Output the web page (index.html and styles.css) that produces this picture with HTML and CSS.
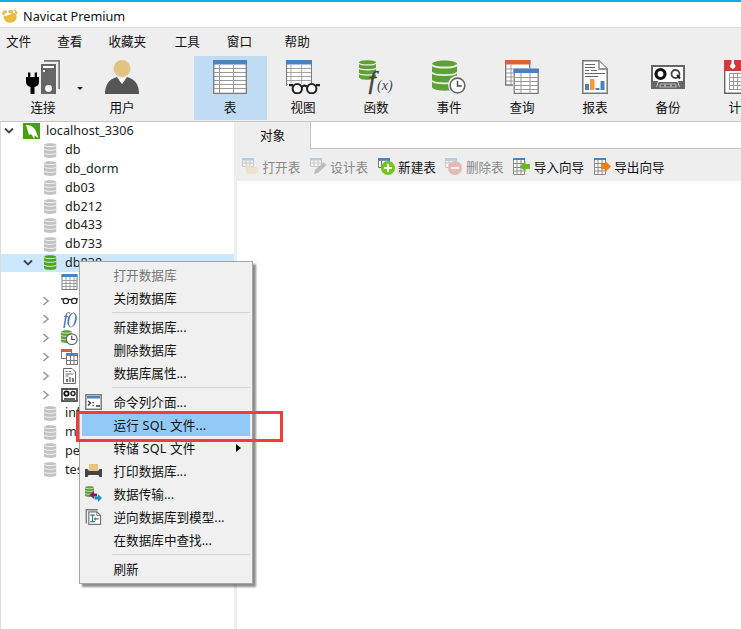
FILE: index.html
```html
<!DOCTYPE html>
<html lang="zh-CN">
<head>
<meta charset="utf-8">
<title>Navicat Premium</title>
<link rel="stylesheet" href="styles.css">
</head>
<body>
<svg class="defs" aria-hidden="true">
  <symbol id="cylinder" viewBox="0 0 24 30" preserveAspectRatio="none">
    <path d="M0 4C0 -.8 24 -.8 24 4V26C24 31 0 31 0 26Z" fill="currentColor"/>
    <path d="M0 4.500C2 8.200 22 8.200 24 4.500M0 12C2 15.500 22 15.500 24 12M0 20C2 23.500 22 23.500 24 20" fill="none" stroke="#fff" stroke-opacity=".85" stroke-width="1.900"/>
  </symbol>
  <symbol id="grid-blue" viewBox="0 0 34 34" preserveAspectRatio="none">
    <path d="M.7 2h32.6v31.3H.7z" fill="#fff" stroke="#777" stroke-width="1.3"/>
    <path d="M0 0h34v4.5H0z" fill="#4a82bd"/>
    <path d="M1 8.500h32M1 12.500h32M1 16.500h32M1 20.500h32M1 24.500h32M1 28.500h32M6.500 5v28M20.500 5v28" stroke="#999" fill="none"/>
  </symbol>
  <symbol id="small-grid" viewBox="0 0 16 16">
    <path d="M.5 1h15v14.5H.5z" fill="#fff" stroke="#777"/>
    <path d="M0 0h16v3H0z" fill="#4a82bd"/>
    <path d="M1 6.5h14M1 9.5h14M1 12.5h14M4.500 3v12M8.500 3v12M12.500 3v12" stroke="#888" fill="none" stroke-width=".8"/>
  </symbol>
  <symbol id="glasses" viewBox="0 0 30 12">
    <path d="M0 3h4M26 3h4" stroke="#222" stroke-width="2.200"/>
    <circle cx="8" cy="6.500" r="4.500" fill="#fff" stroke="#222" stroke-width="2"/>
    <circle cx="22" cy="6.500" r="4.500" fill="#fff" stroke="#222" stroke-width="2"/>
    <path d="M12 5q3-3 6 0" fill="none" stroke="#222" stroke-width="2"/>
  </symbol>
  <symbol id="clock" viewBox="0 0 18 18">
    <circle cx="9" cy="9" r="7.800" fill="#fff" stroke="#666" stroke-width="1.700"/>
    <path d="M9 4v5.500h4.500" fill="none" stroke="#444" stroke-width="1.500"/>
  </symbol>
  <symbol id="queries" viewBox="0 0 34 34">
    <path d="M.7 1h24v24H.7z" fill="#fff" stroke="#777" stroke-width="1.300"/>
    <path d="M0 0h25.500v4.500H0z" fill="#d9603f"/>
    <path d="M1 9h24M1 13h24M1 17h24M1 21h24M6 5v20" stroke="#999"/>
    <path d="M8 8h26v26H8z" fill="#fff"/>
    <path d="M9.200 9.500h24v23.800h-24z" fill="#fff" stroke="#777" stroke-width="1.300"/>
    <path d="M8.500 8.500H34V13H8.500z" fill="#4a82bd"/>
    <path d="M9 17.500h24M9 21.500h24M9 25.500h24M9 29.500h24M16 13v20M25 13v20" stroke="#999"/>
  </symbol>
  <symbol id="report" viewBox="0 0 26 34">
    <path d="M.8.8H17l8.200 8.200v24.200H.8z" fill="#fff" stroke="#777" stroke-width="1.500"/>
    <path d="M17 1v8h8" fill="#fff" stroke="#777" stroke-width="1.300"/>
    <path d="M3 4.500h10M3 7.500h10M3 10.500h4M9 10.500h6M3 13.500h20M3 16.500h13" stroke="#666" stroke-width="1.200"/>
    <path d="M3 24h4v6H3zM13.500 28h4v2h-4zM18.500 21h4v9h-4z" fill="#4a82bd"/>
    <path d="M8 19h4.500v11H8z" fill="#f79a38"/>
  </symbol>
  <symbol id="tape" viewBox="0 0 34 24">
    <path d="M1 1h32v22H1z" fill="#fff" stroke="#666" stroke-width="2"/>
    <circle cx="9.500" cy="9" r="4.500" fill="#fff" stroke="#111" stroke-width="3.200"/>
    <circle cx="24.500" cy="9" r="4" fill="#fff" stroke="#444" stroke-width="1.800"/>
    <path d="M26 10l3 3.500" stroke="#222" stroke-width="2"/>
    <path d="M1 16h6l-2 7H1zM27 16h6v7h-4z" fill="#666"/>
    <path d="M7.500 17h19l2 6h-23z" fill="#666"/>
    <path d="M9 18.500h16l1 4H8z" fill="#aaa"/>
    <path d="M10 20.500h3M15 20.500h4M21 20.500h3" stroke="#555" stroke-width="1.500"/>
  </symbol>
  <symbol id="chevron-right" viewBox="0 0 8 10"><path d="M1.500 1l4.500 4-4.500 4" fill="none" stroke="#999" stroke-width="1.600"/></symbol>
  <symbol id="chevron-down" viewBox="0 0 10 8"><path d="M1 1.500l4 4 4-4" fill="none" stroke="#444" stroke-width="1.900"/></symbol>
</svg>

<div class="window">
  <header class="titlebar">
    <svg class="app-icon" viewBox="0 0 16 14"><path d="M0 5.500Q0 3 1.500 1.800L4 1.200Q5.500 1.500 5 3L3 5q-1.500 1.500-3 .5z" fill="#e8bd3e"/><path d="M6 2q2-2 4-1l1.500 2L10 4.500 7 4zM11.500.2q4 1 4 5.300l-2-1z" fill="#e8bd3e"/><path d="M1.500 6.500Q6 7.500 10.500 4l3.200.5q2.300 4-.7 7.500-3 2.500-7 1.500-4.500-1-4.500-7z" fill="#e8bd3e"/></svg>
    <span class="app-title">Navicat Premium</span>
  </header>

  <nav class="menubar">
    <span>文件</span><span>查看</span><span>收藏夹</span><span>工具</span><span>窗口</span><span>帮助</span>
  </nav>

  <div class="ribbon">
    <div class="tool connect">
      <svg width="34" height="34" viewBox="0 0 34 34"><path d="M18 .8h15.200V29" fill="none" stroke="#777" stroke-width="1.800"/><path d="M15 4h15v30H15z" fill="#666"/><path d="M17 6h11v2H17zM17 10h2v2h-2z" fill="#fff"/><circle cx="22.500" cy="28.500" r="3.400" fill="#fff"/><path d="M2 12.500h2.300V17h4.400v-4.500H11V17h2v5q0 4-4.500 5v7h-4v-7Q0 26 0 22v-5h2z" fill="#000"/></svg>
      <span>连接</span>
    </div>
    <i class="drop"></i>
    <div class="tool user">
      <svg width="34" height="34" viewBox="0 0 34 34"><circle cx="17" cy="8.500" r="8.500" fill="#e4c380"/><path d="M0 34q0-14 12-17l5 7 5-7q12 3 12 17z" fill="#555"/><path d="M12.500 17q4.500 2 9 0L17 24z" fill="#fff"/></svg>
      <span>用户</span>
    </div>
    <i class="divider"></i>
    <div class="tool selected"><svg width="34" height="34"><use href="#grid-blue"/></svg><span>表</span></div>
    <div class="tool"><svg width="34" height="34"><use href="#grid-blue" width="26" height="34"/><path d="M2 23.500h32V34H0v-8h2z" fill="#eee"/><use href="#glasses" x="3" y="22" width="31" height="12.400"/></svg><span>视图</span></div>
    <div class="tool"><svg class="fn" width="34" height="34"><use href="#cylinder" class="green" width="17" height="20"/><text x="9.500" y="29" class="fn-big">f</text><text x="18" y="30" class="fn-small">(x)</text></svg><span>函数</span></div>
    <div class="tool"><svg width="34" height="34"><use href="#cylinder" class="green" width="25" height="31"/><circle cx="25.500" cy="25" r="9.500" fill="#eee"/><use href="#clock" x="17" y="17" width="17" height="17"/></svg><span>事件</span></div>
    <div class="tool"><svg width="34" height="34"><use href="#queries"/></svg><span>查询</span></div>
    <div class="tool"><svg width="26" height="34"><use href="#report"/></svg><span>报表</span></div>
    <div class="tool"><svg width="34" height="34"><use href="#tape" y="5" width="34" height="24"/></svg><span>备份</span></div>
    <div class="tool"><svg width="34" height="34" viewBox="0 0 34 34"><path d="M.7 1h32.600v32.300H.7z" fill="#fff" stroke="#666" stroke-width="1.400"/><path d="M0 0h34v11H0z" fill="#cf3b3b"/><path d="M7.500 0h2.500v4a2.500 2.500 0 1 1-2.500 0z" fill="#fff"/><path d="M5 13.500h24M5 17.500h24M5 21.500h24M5 25.500h24M5 29.500h24M5.500 14v16M9.500 14v16M13.500 14v16M17.500 14v16M21.500 14v16" stroke="#999"/></svg><span>计划</span></div>
  </div>

  <main class="workspace">
    <aside class="tree">
      <div class="row root"><svg class="chev-d"><use href="#chevron-down"/></svg><svg class="server" viewBox="0 0 17 16"><path d="M0 0h17v16H0z" fill="#43a30c"/><path d="M3 2q8-.5 10.500 8L15.500 15l-4-2.500v3.500L8 11l-2 1z" fill="#fff"/></svg><span>localhost_3306</span></div>
      <div class="row db"><svg class="dbi"><use href="#cylinder"/></svg><span>db</span></div>
      <div class="row db"><svg class="dbi"><use href="#cylinder"/></svg><span>db_dorm</span></div>
      <div class="row db"><svg class="dbi"><use href="#cylinder"/></svg><span>db03</span></div>
      <div class="row db"><svg class="dbi"><use href="#cylinder"/></svg><span>db212</span></div>
      <div class="row db"><svg class="dbi"><use href="#cylinder"/></svg><span>db433</span></div>
      <div class="row db"><svg class="dbi"><use href="#cylinder"/></svg><span>db733</span></div>
      <div class="row db open"><svg class="chev-d"><use href="#chevron-down"/></svg><svg class="dbi green"><use href="#cylinder"/></svg><span>db838</span></div>
      <div class="row sub"><i class="chev-r"></i><svg class="si"><use href="#small-grid"/></svg></div>
      <div class="row sub"><svg class="chev-r"><use href="#chevron-right"/></svg><svg class="si"><use href="#glasses" y="4" width="18" height="7.500"/></svg></div>
      <div class="row sub"><svg class="chev-r"><use href="#chevron-right"/></svg><svg class="si fn"><text x="2" y="13" class="fn-tree">f()</text></svg></div>
      <div class="row sub"><svg class="chev-r"><use href="#chevron-right"/></svg><svg class="si"><use href="#cylinder" class="green" width="11" height="13"/><use href="#clock" x="4.500" y="3" width="12.500" height="12.500"/></svg></div>
      <div class="row sub"><svg class="chev-r"><use href="#chevron-right"/></svg><svg class="si" viewBox="0 0 17 16"><path d="M.5.5h10v9H.5zM6 5h10.500v10.500H6z" fill="#fff" stroke="#777"/><path d="M0 0h11v3H0z" fill="#d9603f"/><path d="M5 4h12v12H5z" fill="#fff"/><path d="M5.500 5h11v10.500h-11zM6 11.500h10M9.500 7v8M13 7v8" fill="none" stroke="#777"/><path d="M5 4h12v3H5z" fill="#4a82bd"/></svg></div>
      <div class="row sub"><svg class="chev-r"><use href="#chevron-right"/></svg><svg class="si" viewBox="0 0 17 16"><path d="M2.500.5H11l3.500 3.500v11.500h-12z" fill="#fff" stroke="#666"/><path d="M4.500 3.500h2M8 3.500h2M4.500 6h8M4.500 8h3" stroke="#666"/><path d="M5 11h2v3H5zM11 10h2v4h-2z" fill="#4a82bd"/><path d="M8 9h2v5H8z" fill="#f47b2c"/></svg></div>
      <div class="row sub"><svg class="chev-r"><use href="#chevron-right"/></svg><svg class="si" viewBox="0 0 17 16"><path d="M1 2h15v12H1z" fill="#fff" stroke="#555" stroke-width="1.800"/><circle cx="5.500" cy="6.500" r="2.200" fill="#fff" stroke="#111" stroke-width="1.800"/><circle cx="12" cy="6.500" r="2" fill="#fff" stroke="#222" stroke-width="1.400"/><path d="M3 11h11v3H3z" fill="#666"/></svg></div>
      <div class="row db"><svg class="dbi"><use href="#cylinder"/></svg><span>inf</span></div>
      <div class="row db"><svg class="dbi"><use href="#cylinder"/></svg><span>my</span></div>
      <div class="row db"><svg class="dbi"><use href="#cylinder"/></svg><span>per</span></div>
      <div class="row db"><svg class="dbi"><use href="#cylinder"/></svg><span>test</span></div>
    </aside>

    <section class="pane">
      <div class="tabs"><div class="tab">对象</div><div class="tab-space"></div></div>
      <div class="actions">
        <div class="action a1 off"><svg viewBox="0 0 17 17"><path d="M.5.5h11v8H.5zM.5 5h11M4 2v7M8 2v7" fill="#fff" stroke="#777"/><path d="M0 0h12v2.500H0z" fill="#4a82bd"/><path d="M3 7h5l1.500 2H15v7H5z" fill="#e4c380"/><path d="M6 10h11l-2 6H5z" fill="#edcf90"/></svg><span>打开表</span></div>
        <div class="action a2 off"><svg viewBox="0 0 17 17"><path d="M.5.5h11v8H.5zM.5 5h11M4 2v7M8 2v7" fill="#fff" stroke="#777"/><path d="M0 0h12v2.500H0z" fill="#4a82bd"/><path d="M4 16l1-4 8.500-8 3 3-8.500 8z" fill="#555"/></svg><span>设计表</span></div>
        <div class="action a3"><svg viewBox="0 0 17 17"><path d="M.5.5h11v9H.5zM3.500 2v7" fill="#fff" stroke="#777"/><path d="M0 0h12v2.800H0z" fill="#4a82bd"/><circle cx="10" cy="10" r="7" fill="#72c819"/><path d="M10 6v8M6 10h8" stroke="#fff" stroke-width="2"/></svg><span>新建表</span></div>
        <div class="action a4 off"><svg viewBox="0 0 17 17"><path d="M.5.5h11v9H.5zM4 2v7M.5 5h11" fill="#fff" stroke="#777"/><path d="M0 0h12v2.800H0z" fill="#4a82bd"/><circle cx="10" cy="10" r="7" fill="#d34a4a"/><path d="M6 10h8" stroke="#fff" stroke-width="2.200"/></svg><span>删除表</span></div>
        <div class="action a5"><svg viewBox="0 0 17 17"><path d="M.5.500h11v16H.5zM1 5.500h10M1 9.500h10M1 13h10M4 2v15M8 2v15" fill="#fff" stroke="#888"/><path d="M0 0h12v2H0z" fill="#4a82bd"/><path d="M7 8.500l5.500-5.500V6H17v5h-4.500v3z" fill="#6ab625"/></svg><span>导入向导</span></div>
        <div class="action a6"><svg viewBox="0 0 17 17"><path d="M.5.500h11v16H.5zM1 5.500h10M1 9.500h10M1 13h10M4 2v15M8 2v15" fill="#fff" stroke="#888"/><path d="M0 0h12v2H0z" fill="#4a82bd"/><path d="M17 8.500L11.500 3V6H7v5h4.500v3z" fill="#ff7c0a"/></svg><span>导出向导</span></div>
      </div>
      <div class="content"></div>
    </section>
  </main>

  <div class="context">
    <div class="item off"><i></i><span>打开数据库</span></div>
    <div class="item"><i></i><span>关闭数据库</span></div>
    <hr>
    <div class="item"><i></i><span>新建数据库...</span></div>
    <div class="item"><i></i><span>删除数据库</span></div>
    <div class="item"><i></i><span>数据库属性...</span></div>
    <hr>
    <div class="item"><svg viewBox="0 0 17 16"><path d="M.8.8h15.400v14.400H.8z" fill="#fff" stroke="#777" stroke-width="1.500"/><path d="M2 2h13v2.500H2z" fill="#4a82bd"/><path d="M3 7l2.500 2L3 11.500M11 12h4" fill="none" stroke="#333" stroke-width="1.300"/><path d="M7.500 8h1.300v1.300H7.500zM7.500 11h1.300v1.300H7.500z" fill="#333"/></svg><span>命令列介面...</span></div>
    <div class="item active"><i></i><span class="sql">运行 SQL 文件...</span></div>
    <div class="item"><i></i><span class="sql">转储 SQL 文件</span><b></b></div>
    <div class="item"><svg viewBox="0 0 17 16"><path d="M4 1h9v7H4z" fill="#e9c47d"/><path d="M0 6h2.500l1.500 2h9l1.500-2H17v8h-2.500l-1-2h-10l-1 2H0z" fill="#444"/></svg><span>打印数据库...</span></div>
    <div class="item"><svg viewBox="0 0 17 16"><use href="#cylinder" class="green" width="9" height="11"/><path d="M4.500 9L9 5v2.500h3v3H9V13z" fill="#8c1d63"/><path d="M17 12l-4-4v2.500H9.500v3H13V16z" fill="#1790c4"/></svg><span>数据传输...</span></div>
    <div class="item"><svg viewBox="0 0 17 17"><path d="M.8 15.500V.8H13" fill="none" stroke="#777" stroke-width="1.400"/><path d="M3.500 3H12l4 4v9.300H3.500z" fill="#fff" stroke="#777" stroke-width="1.300"/><path d="M12 3v4h4" fill="none" stroke="#777"/><path d="M5 6.500h5M5 13.500h5M7.500 6.500v7M9 10.500h5" stroke="#2582a8" stroke-width="1.300"/><path d="M9 10.500l2-2v4z" fill="#419449"/></svg><span>逆向数据库到模型...</span></div>
    <div class="item"><i></i><span>在数据库中查找...</span></div>
    <hr>
    <div class="item"><i></i><span>刷新</span></div>
  </div>
  <div class="highlight"></div>
</div>
</body>
</html>
```
FILE: styles.css
```css
* { box-sizing: border-box; }
body { margin: 0; overflow: hidden; }
.window {
  position: relative;
  display: flex;
  flex-direction: column;
  width: 741px;
  height: 629px;
  overflow: hidden;
  background: #fff;
  color: #111;
  font-family: "Noto Sans", "Noto Sans CJK SC", sans-serif;
  font-size: 12.6px;
  line-height: 18px;
  white-space: nowrap;
}
svg { display: block; flex: none; }
.defs { position: absolute; width: 0; height: 0; }
.green { color: #5fa036; }
.fn { overflow: visible; }

.titlebar {
  display: flex;
  align-items: center;
  flex: none;
  height: 28px;
  padding: 2px 0 0 2px;
  border-top: 2px solid #08aef0;
  border-bottom: 1px solid #dcdcdc;
}
.app-icon { width: 16px; height: 14px; }
.app-title { margin-left: 5px; font-size: 12.7px; }

.menubar {
  display: flex;
  flex: none;
  height: 28px;
  padding: 5px 0 0 6px;
  background: #eee;
}
.menubar span { margin-right: 26px; }
.menubar span:nth-child(3) { margin-right: 28.500px; }
.menubar span:nth-child(4) { margin-right: 27px; }
.menubar span:nth-child(5) { margin-right: 32.500px; }

.ribbon {
  display: flex;
  flex: none;
  height: 66px;
  background: #eee;
  border-bottom: 1px solid #c8c8c8;
}
.tool {
  display: flex;
  flex: none;
  flex-direction: column;
  align-items: center;
  width: 73px;
  height: 64px;
  padding-top: 4px;
}
.tool span { margin-top: 5px; }
.connect { margin-left: 6.500px; }
.drop {
  width: 6px;
  height: 3px;
  margin: 31px 3px 0 -3px;
  border: solid transparent;
  border-width: 3px 3px 0;
  border-top-color: #222;
}
.user { margin-right: 18px; }
.divider { width: 1px; height: 61px; margin: 1px 17px 0 0; background: #ddd; }
.selected { background: #c0dcf3; }
.fn-big, .fn-small, .fn-tree { font-family: "Liberation Serif", serif; font-style: italic; fill: #444; }
.fn-big { font-size: 26px; stroke: #444; stroke-width: .4px; }
.fn-small { font-size: 14px; }
.fn-tree { font-size: 17px; fill: #3871ad; letter-spacing: -1px; }

.workspace { display: flex; flex: 1; min-height: 0; }
.tree { flex: none; width: 234px; border-left: 1px solid #ddd; }
.row { display: flex; align-items: center; height: 18.800px; padding-left: 49px; color: #222; }
.db { padding-left: 43px; }
.dbi { width: 12.500px; height: 15px; margin-right: 8.500px; color: #c2c2c2; }
.root { padding-left: 3px; }
.chev-d { width: 10px; height: 8px; }
.server { width: 17px; height: 16px; margin: 0 6px 0 9px; }
.open { padding-left: 22px; background: #cce8ff; }
.open .dbi { margin-left: 11px; color: #4ca51c; }
.sub { padding-left: 41px; }
.chev-r { width: 8px; height: 10px; margin-right: 11px; }
.si { width: 17px; height: 16px; }

.pane { display: flex; flex: 1; flex-direction: column; min-width: 0; background: #eee; }
.tabs { display: flex; flex: none; height: 27px; }
.tab { width: 76px; padding: 5px 0 0 26px; }
.tab-space { flex: 1; background: #fff; border-left: 1px solid #c4c4c4; border-bottom: 1px solid #c4c4c4; }
.actions { display: flex; flex: none; height: 32px; padding: 3px 0 0 8px; align-items: center; }
.action { display: flex; flex: none; align-items: center; }
.action span { padding-top: 2px; }
.action svg { width: 17px; height: 17px; margin-right: 3.500px; }
.action.off svg { opacity: .32; }
.action.off { color: #888; }
.a1, .a2, .a3, .a4 { width: 67.800px; }
.a5 { width: 80.500px; }
.content { flex: 1; margin-left: 3px; background: #fff; }

.context {
  position: absolute;
  left: 79px;
  top: 261px;
  width: 174px;
  height: 323px;
  padding: 1px 2px;
  background: #f0f0f0;
  border: 1px solid #a5a5a5;
  box-shadow: 3px 3px 2px rgba(0, 0, 0, .45);
}
.item { display: flex; align-items: center; height: 23px; padding-left: 3px; }
.item > svg, .item > i { flex: none; width: 17px; height: 16px; margin-right: 12px; }
.item span { padding-top: 2px; margin-left: -.500px; }
.sql { letter-spacing: .2px; }
.item.off { color: #777; }
.active { background: #91c9f7; }
.item b { margin-left: 40px; border: solid transparent; border-width: 4px 0 4px 5px; border-left-color: #000; }
.context hr { height: 1px; margin: 3px 0 2px 30px; border: 0; background: #d5d5d5; }
.highlight {
  position: absolute;
  left: 76px;
  top: 411px;
  width: 207px;
  height: 31px;
  border: 3px solid #f33b3b;
}
```
